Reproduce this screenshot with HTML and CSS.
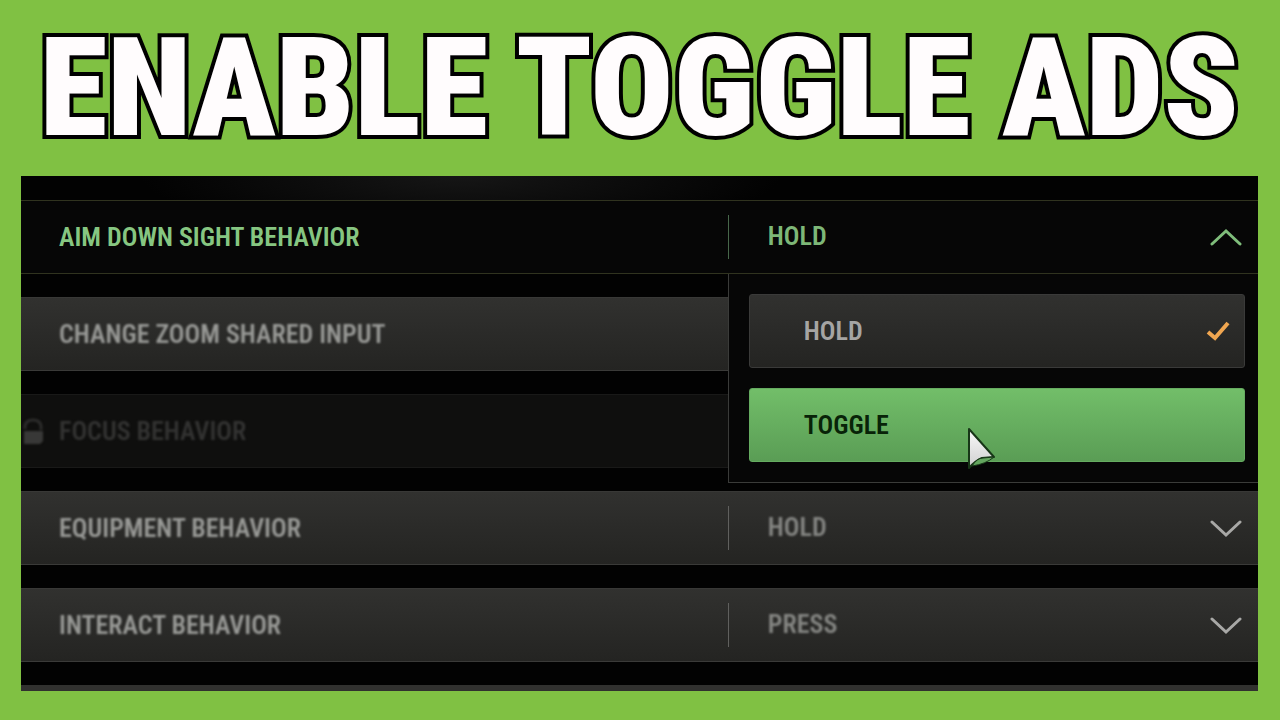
FILE: index.html
```html
<!DOCTYPE html>
<html lang="en">
<head>
  <meta charset="UTF-8">
  <title>Enable Toggle ADS</title>
  <link rel="stylesheet" href="styles.css">
</head>
<body>
  <h1 class="title">ENABLE TOGGLE ADS</h1>

  <main class="panel">
    <!-- Open setting -->
    <div class="row row-active">
      <label class="row-label" for="aim">AIM DOWN SIGHT BEHAVIOR</label>
      <div class="row-value">
        <button type="button" id="aim" class="value" aria-haspopup="listbox" aria-expanded="true">HOLD</button>
        <svg class="chevron" width="32" height="20" viewBox="0 0 32 20"><path d="M2 17 L16 4 L30 17"/></svg>
      </div>

      <div class="menu" role="listbox" aria-labelledby="aim">
        <button type="button" class="option" role="option" aria-selected="true">
          HOLD
          <svg class="check" width="24" height="22" viewBox="0 0 24 22"><path d="M2 12 L9 18 L22 3"/></svg>
        </button>
        <button type="button" class="option option-hover" role="option" aria-selected="false">
          TOGGLE
          <svg class="cursor" width="32" height="44" viewBox="0 0 32 44">
            <defs>
              <linearGradient id="arrow" x1="0" y1="0" x2="0" y2="1">
                <stop offset="0" stop-color="#fafafa"/>
                <stop offset="1" stop-color="#cfcfcf"/>
              </linearGradient>
            </defs>
            <path d="M3 2 L28 30 L16 31 Q9 34 3 41 Z" fill="url(#arrow)" stroke="#173617" stroke-width="2" stroke-linejoin="round"/>
            <path d="M28 30 Q20 37 6 39 Q11 31 17 31 Z" fill="#64a65f" stroke="#173617" stroke-width="1"/>
          </svg>
        </button>
      </div>
    </div>

    <div class="row">
      <span class="row-label">CHANGE ZOOM SHARED INPUT</span>
    </div>

    <!-- Locked setting -->
    <div class="row row-locked">
      <svg class="lock" width="20" height="26" viewBox="0 0 20 26">
        <path class="shackle" d="M2 11 V8 Q3 2 10 2 Q17 2 18 8 V12"/>
        <path class="lock-body" d="M1 13 H20 V23 L17 26 H1 Z"/>
      </svg>
      <span class="row-label">FOCUS BEHAVIOR</span>
    </div>

    <div class="row">
      <label class="row-label" for="equipment">EQUIPMENT BEHAVIOR</label>
      <div class="row-value">
        <select id="equipment" class="value">
          <option>HOLD</option>
          <option>TOGGLE</option>
        </select>
        <svg class="chevron" width="32" height="20" viewBox="0 0 32 20"><path d="M2 4 L16 17 L30 4"/></svg>
      </div>
    </div>

    <div class="row">
      <label class="row-label" for="interact">INTERACT BEHAVIOR</label>
      <div class="row-value">
        <select id="interact" class="value">
          <option>PRESS</option>
          <option>HOLD</option>
        </select>
        <svg class="chevron" width="32" height="20" viewBox="0 0 32 20"><path d="M2 4 L16 17 L30 4"/></svg>
      </div>
    </div>

    <div class="row-next"></div>
  </main>
</body>
</html>
```
FILE: styles.css
```css
* {
  box-sizing: border-box;
}

body {
  margin: 0;
  padding: 0 22px 29px 21px;
  background: #80c143;
  font-family: "Roboto Condensed", "Liberation Sans Narrow", "Liberation Sans", sans-serif;
}

.title {
  margin: 0;
  height: 176px;
  line-height: 176px;
  font-family: Impact, "Roboto Condensed", sans-serif;
  font-size: 138px;
  font-weight: 900;
  text-align: center;
  white-space: nowrap;
  color: #fffcfd;
  -webkit-text-stroke: 8px #000;
  stroke-linejoin: round;
  paint-order: stroke fill;
}

.panel {
  display: flex;
  flex-direction: column;
  gap: 23px;
  padding-top: 24px;
  background: radial-gradient(ellipse 320px 60px at 440px 0, #161616, #020202);
}

.row {
  position: relative;
  display: grid;
  grid-template-columns: 4fr 3fr;
  align-items: center;
  height: 74px;
  background: linear-gradient(#31312f, #242422);
  border-top: 1px solid #383836;
  border-bottom: 1px solid #3a3a38;
  color: #989996;
  font-size: 26px;
  font-weight: 600;
}

.row-label {
  padding-left: 38px;
  filter: blur(1px);
}

.row-value {
  position: relative;
  display: flex;
  align-items: center;
  height: 44px;
  border-left: 1px solid #60605e;
}

.value {
  appearance: none;
  width: 100%;
  height: 44px;
  padding: 0 0 2px 39px;
  border: none;
  background: none;
  color: #858683;
  font: inherit;
  text-align: left;
  filter: blur(1px);
  cursor: pointer;
}

.chevron {
  position: absolute;
  right: 16px;
  fill: none;
  stroke: #a8a8a6;
  stroke-width: 3;
  stroke-linecap: round;
  pointer-events: none;
}

/* open row */
.row-active {
  background: #060606;
  border-color: #30331f;
  color: #86c681;
}

.row-active .row-label,
.row-active .value {
  filter: none;
}

.row-active .value {
  color: #7db777;
}

.row-active .row-value {
  border-color: #47674a;
}

.row-active .chevron {
  stroke: #7fbd7b;
}

/* locked row */
.row-locked {
  background: #0f0f0e;
  border-color: #191918;
  color: #333332;
}

.lock {
  position: absolute;
  left: 2px;
  filter: blur(1px);
}

.shackle {
  fill: none;
  stroke: #2c2c2b;
  stroke-width: 3;
}

.lock-body {
  fill: #383837;
}

/* dropdown */
.menu {
  position: absolute;
  top: 100%;
  right: 0;
  z-index: 1;
  display: flex;
  flex-direction: column;
  gap: 20px;
  width: calc(100% * 3 / 7);
  margin-top: 1px;
  padding: 20px 13px 20px 20px;
  background: #060606;
  border-left: 1px solid #3a3b39;
  border-bottom: 1px solid #3a3b39;
}

.option {
  position: relative;
  display: flex;
  align-items: center;
  justify-content: space-between;
  height: 74px;
  padding: 0 14px 0 54px;
  border: 1px solid #3a3a39;
  border-radius: 3px;
  background: linear-gradient(#31312f, #242422);
  color: #a5a5a4;
  font: inherit;
  cursor: pointer;
}

.option-hover {
  border-color: #65ab60;
  background: linear-gradient(#72be69, #5a9d55);
  color: #082308;
}

.check {
  fill: none;
  stroke: #f0a650;
  stroke-width: 4;
}

.cursor {
  position: absolute;
  top: 38px;
  left: 216px;
}

.row-next {
  height: 6px;
  background: #31312f;
}
```
